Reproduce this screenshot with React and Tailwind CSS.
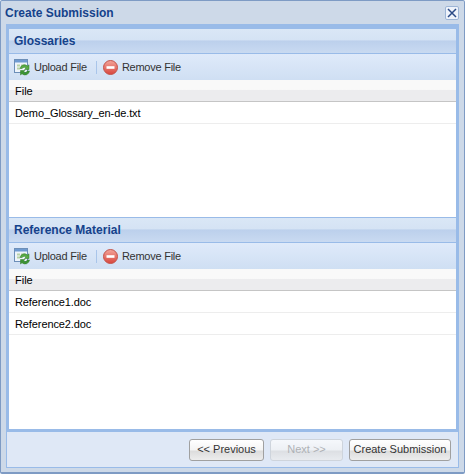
const font = { fontFamily: '"Liberation Sans", Arial, sans-serif' };

function UploadIcon() {
  return (
    <svg width="17" height="17" viewBox="0 0 17 17" className="shrink-0">
      <rect x="0.5" y="0.5" width="13" height="13" fill="#eef4fb" stroke="#6d8fb8" />
      <rect x="1" y="1" width="12" height="2.5" fill="#6f9bd1" />
      <path d="M3 5.5h3v2H3zM7 5.5h4v2H7zM3 8.5h3v2H3z" fill="#b9d3a6" />
      <path d="M6 9.5a4.5 4.5 0 0 1 7.5-2.5l1.5-1.2V10.5h-4.5l1.5-1.5a2.4 2.4 0 0 0-3.8.5z" fill="#58ab45" stroke="#2f7a26" strokeWidth="0.5" />
      <path d="M15.5 12a4.5 4.5 0 0 1-7.5 2.8L6.500 16V11.500H11l-1.500 1.500a2.400 2.400 0 0 0 3.800-1z" fill="#3d9431" stroke="#2f7a26" strokeWidth="0.5" />
    </svg>
  );
}

function RemoveIcon() {
  return (
    <svg width="15" height="15" viewBox="0 0 15 15" className="shrink-0">
      <defs>
        <linearGradient id="rm" x1="0" y1="0" x2="0" y2="1">
          <stop offset="0" stopColor="#f3a59b" />
          <stop offset="1" stopColor="#d8453c" />
        </linearGradient>
      </defs>
      <circle cx="7.5" cy="7.5" r="7" fill="url(#rm)" stroke="#c2544b" />
      <rect x="3.5" y="6.2" width="8" height="2.6" fill="#ffffff" />
    </svg>
  );
}

function Panel({ title, files, bodyClass }) {
  return (
    <section className={`flex flex-col ${bodyClass}`}>
      <div className="h-[25px] shrink-0 border-t border-[#99bbe8] bg-[linear-gradient(#dae7f6_0%,#d5e3f4_45%,#bcd0ec_50%,#c9daf1_100%)] pl-[5px] pt-[4px] text-[12px] font-bold leading-[17px] text-[#15428b]">
        {title}
      </div>
      <div className="flex h-[27px] shrink-0 items-center border-t border-[#99bbe8] bg-[linear-gradient(#dfeafa,#cfdff3)] pl-[5px] text-[11px] tracking-[-0.25px] text-[#333]">
        <span className="flex items-center gap-[3px]">
          <UploadIcon />
          <span>Upload File</span>
        </span>
        <span className="ml-[9px] mr-[6px] h-[13px] w-px bg-[#a9c5ea]" />
        <span className="flex items-center gap-[4px]">
          <RemoveIcon />
          <span>Remove File</span>
        </span>
      </div>
      <div className="flex h-[22px] shrink-0 items-center border-b border-[#c5c5c5] bg-[linear-gradient(#f9f9f9_0%,#f9f9f9_45%,#ececee_50%,#ececee_100%)] pl-[6px] pt-px text-[11px] text-black">
        File
      </div>
      {files.map((f) => (
        <div key={f} className="flex h-[22px] shrink-0 items-center border-b border-[#ededed] bg-white pl-[6px] pt-px text-[11px] tracking-[-0.1px] text-black">
          {f}
        </div>
      ))}
      <div className="flex-1 bg-white" />
    </section>
  );
}

function FooterButton({ children, disabled, className }) {
  return (
    <button
      disabled={disabled}
      className={`h-[22px] whitespace-nowrap rounded-[3px] border text-[11px] bg-[linear-gradient(#ffffff_0%,#f4f4f4_50%,#dcdcdc_55%,#ededed_100%)] ${disabled ? 'border-[#c8ccd2] text-[#9a9a9a] opacity-70' : 'border-[#a0a0a0] text-[#333]'} ${className}`}
    >
      {children}
    </button>
  );
}

export default function App() {
  return (
    <div style={font} className="flex h-[474px] w-[465px] flex-col rounded-[2px] border border-b-2 border-[#7e9bc4] bg-[#cdd9e8]">
      <div className="flex h-[23px] shrink-0 items-center justify-between pl-[4px] pr-[5px]">
        <h1 className="text-[12px] font-bold text-[#15428b]">Create Submission</h1>
        <button className="flex h-[14px] w-[14px] items-center justify-center rounded-[2px] border border-[#9db5d6] bg-[#eef3fb]">
          <svg width="10" height="10" viewBox="0 0 10 10">
            <path d="M1 1l8 8M9 1l-8 8" stroke="#2a4a86" strokeWidth="1.5" />
          </svg>
        </button>
      </div>
      <div className="mx-[5px] flex h-[444px] flex-col border border-[#99bbe8] bg-[#dfe8f6]">
        <div className="flex h-[407px] shrink-0 flex-col border-x-2 border-y-[3px] border-[#99bbe8]">
          <Panel title="Glossaries" files={['Demo_Glossary_en-de.txt']} bodyClass="h-[189px] shrink-0" />
          <Panel title="Reference Material" files={['Reference1.doc', 'Reference2.doc']} bodyClass="flex-1" />
        </div>
        <div className="flex flex-1 items-center justify-end gap-[6px] pr-[7px]">
          <FooterButton className="w-[75px]">&lt;&lt; Previous</FooterButton>
          <FooterButton disabled className="w-[73px]">Next &gt;&gt;</FooterButton>
          <FooterButton className="w-[102px]">Create Submission</FooterButton>
        </div>
      </div>
    </div>
  );
}
